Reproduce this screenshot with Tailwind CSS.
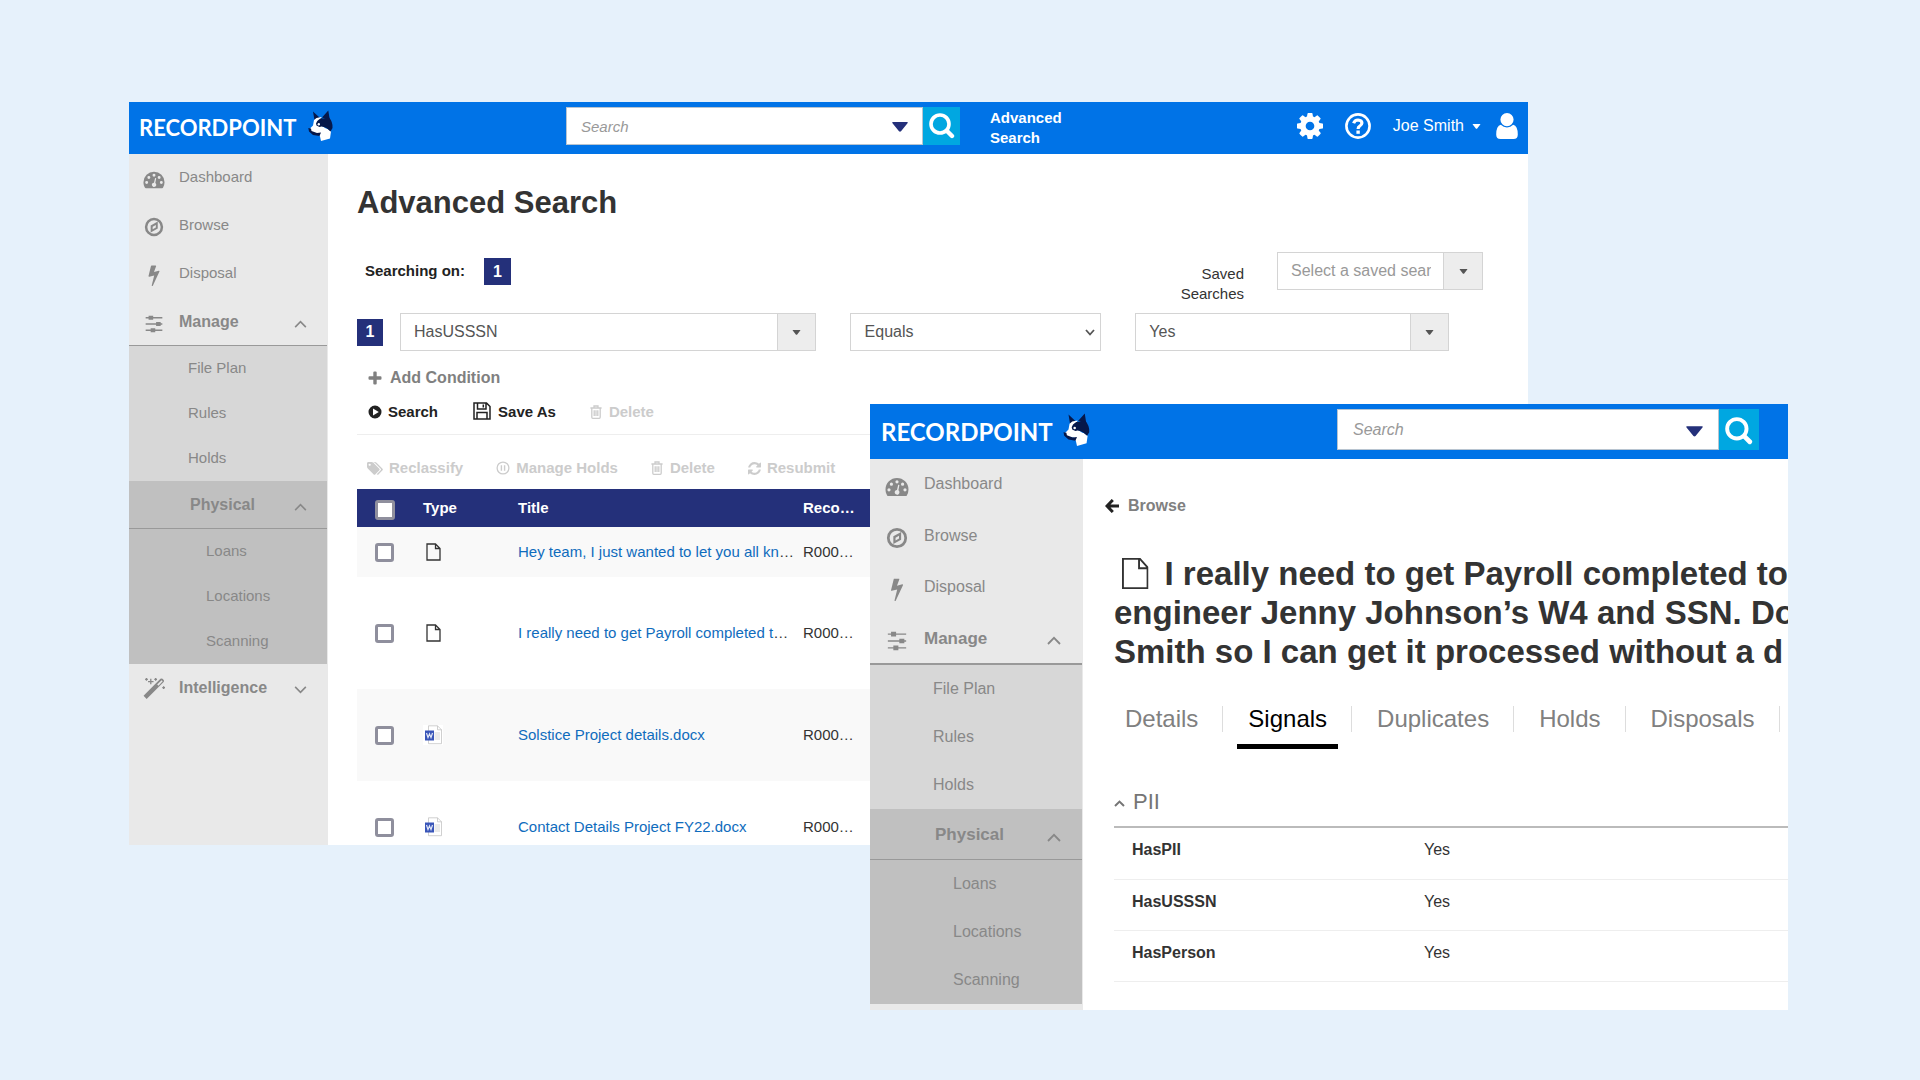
<!DOCTYPE html>
<html lang="en">
<head>
  <meta charset="UTF-8">
  <meta name="viewport" content="width=device-width, initial-scale=1.0">
  <title>RecordPoint - Advanced Search</title>
  <script src="https://cdn.jsdelivr.net/npm/@tailwindcss/browser@4"></script>
</head>
<body class="relative min-h-screen overflow-hidden bg-[#e6f1fb] font-['Liberation_Sans',Arial,sans-serif] text-[15px] text-[#333]">

  <!-- Icon sprite -->
  <svg class="hidden" xmlns="http://www.w3.org/2000/svg">
    <symbol id="dog" viewBox="0 0 26 32">
      <path fill="#06184a" d="M5 1.500L12 8L6.500 10.500Z M20.300 .5L21.800 10L14 7.500Z"/>
      <path fill="#fff" d="M6 10L8.500 8L13.500 7L12 12L14 16L18 18.500L20 19L23 21.500L22 28.500L13 31L12 26.500L10 23L4 23L1 19.500L5 15.500Z"/>
      <path fill="#06184a" d="M11 9.500Q13 7.500 15 8.500L21 7.500Q25 12 24.500 18L22.500 21.500L18.500 18Q14 15.500 11.500 17L8.500 15.500L8 13.500Q9 10.500 11 9.500Z"/>
      <path fill="#06184a" d="M.3 18L3 18.500L3.500 21L9 23L13 22.500L11.500 26L5 25L1 21.500Z"/>
      <circle cx="10.800" cy="14.200" r="1.200" fill="#fff"/>
    </symbol>
    <symbol id="gauge" viewBox="0 0 24 20">
      <path fill="currentColor" fill-rule="evenodd" d="M12 1A11.500 11.500 0 0 0 .5 12.500c0 2.200.6 4.200 1.700 6q.3.500.9.500h17.800q.6 0 .9-.5a11.500 11.500 0 0 0 1.700-6A11.500 11.500 0 0 0 12 1ZM4 11.200a1.600 1.600 0 1 1 0 3.200a1.600 1.600 0 1 1 0-3.200ZM6.400 5.600a1.600 1.600 0 1 1 0 3.200a1.600 1.600 0 1 1 0-3.200ZM12 3.200a1.600 1.600 0 1 1 0 3.200a1.600 1.600 0 1 1 0-3.200ZM17.600 5.600a1.600 1.600 0 1 1 0 3.200a1.600 1.600 0 1 1 0-3.200ZM20 11.200a1.600 1.600 0 1 1 0 3.200a1.600 1.600 0 1 1 0-3.200ZM13.200 7.800l1.200.3l-1 5.200a2.400 2.400 0 1 1-1.400-.4Z"/>
    </symbol>
    <symbol id="compass" viewBox="0 0 24 24">
      <circle cx="12" cy="12" r="9.500" fill="none" stroke="currentColor" stroke-width="3"/>
      <path fill="currentColor" fill-rule="evenodd" d="M16.500 5.500V13.800L8 18.500V10.200ZM14.200 9.600L10.400 11.800V14.800L14.200 12.600Z"/>
    </symbol>
    <symbol id="bolt" viewBox="0 0 1792 1792">
      <path fill="currentColor" d="M1333 566q18 20 7 44l-540 1157q-13 25-42 25-4 0-14-2-17-5-25.500-19t-4.500-30l197-808-406 101q-4 1-12 1-18 0-31-11-18-15-13-39l201-825q4-16 17-26t31-10h328q19 0 32 12.500t13 29.500q0 8-5 18l-171 463 396-98q8-2 12-2 19 0 34 15z"/>
    </symbol>
    <symbol id="sliders" viewBox="0 0 24 24">
      <path stroke="currentColor" stroke-width="1.600" d="M2 4.500h20M2 12h20M2 19.500h20"/>
      <path fill="currentColor" d="M5.500 2h5.500v5H5.500zM14.500 9.500H20v5h-5.500zM8 17h5.500v5H8z"/>
    </symbol>
    <symbol id="wand" viewBox="0 0 24 24">
      <path fill="currentColor" fill-rule="evenodd" d="M.6 20.500L19 2Q20.200 1 21.300 2L22.600 3.300Q23.500 4.400 22.500 5.500L4 24ZM20.300 3.500L15.500 8.200L16.800 9.500L21.500 4.700Z"/>
      <path stroke="currentColor" stroke-width="1.400" d="M8.500 2v6M5.500 5h6M3.800 1v3M2.300 2.500h3M13.800 1v3M12.300 2.500h3M22.500 10v3M21 11.500h3"/>
    </symbol>
    <symbol id="chevron-up" viewBox="0 0 14 9">
      <path fill="none" stroke="currentColor" stroke-width="1.800" d="M1 8L7 1.800L13 8"/>
    </symbol>
    <symbol id="chevron-up-bold" viewBox="0 0 11 7">
      <path fill="none" stroke="currentColor" stroke-width="2" d="M1 6L5.500 1.600L10 6"/>
    </symbol>
    <symbol id="chevron-down" viewBox="0 0 14 9">
      <path fill="none" stroke="currentColor" stroke-width="1.800" d="M1 1L7 7.200L13 1"/>
    </symbol>
    <symbol id="chevron-down-bold" viewBox="0 0 10 7">
      <path fill="none" stroke="currentColor" stroke-width="1.800" d="M1 1L5 5.500L9 1"/>
    </symbol>
    <symbol id="caret" viewBox="0 0 16 10">
      <path fill="currentColor" d="M.5 0H15.500Q16 .6 15.500 1.200L9 9.300Q8 10 7 9.300L.5 1.200Q0 .6 .5 0Z"/>
    </symbol>
    <symbol id="magnifier" viewBox="0 0 26 26">
      <circle cx="11" cy="11" r="9" fill="none" stroke="currentColor" stroke-width="3.600"/>
      <path stroke="currentColor" stroke-width="4.400" stroke-linecap="round" d="M18 18L23 23"/>
    </symbol>
    <symbol id="cog" viewBox="128 128 1536 1536">
      <path fill="currentColor" d="M1152 896q0-106-75-181t-181-75-181 75-75 181 75 181 181 75 181-75 75-181zm512-109v222q0 12-8 23t-20 13l-185 28q-19 54-39 91 35 50 107 138 10 12 10 25t-9 23q-27 37-99 108t-94 71q-12 0-26-9l-138-108q-44 23-91 38-16 136-29 186-7 28-36 28h-222q-14 0-24.500-8.500t-11.500-21.500l-28-184q-49-16-90-37l-141 107q-10 9-25 9-14 0-25-11-126-114-165-168-7-10-7-23 0-12 8-23 15-21 51-66.500t54-70.500q-27-50-41-99l-183-27q-13-2-21-12.500t-8-23.500v-222q0-12 8-23t19-13l186-28q14-46 39-92-40-57-107-138-10-12-10-24 0-10 9-23 26-36 98.500-107.500t94.500-71.500q13 0 26 10l138 107q44-23 91-38 16-136 29-186 7-28 36-28h222q14 0 24.500 8.500t11.500 21.500l28 184q49 16 90 37l142-107q9-9 24-9 13 0 25 10 129 119 165 170 7 8 7 22 0 12-8 23-15 21-51 66.500t-54 70.500q26 50 41 98l183 28q13 2 21 12.500t8 23.500z"/>
    </symbol>
    <symbol id="help" viewBox="0 0 26 26">
      <circle cx="13" cy="13" r="11.600" fill="none" stroke="currentColor" stroke-width="2.600"/>
      <path fill="none" stroke="currentColor" stroke-width="3.200" d="M8.600 10.200Q9.800 7 13 7Q16.900 7.200 16.900 10Q16.800 11.800 14.800 13Q13.100 14 13.100 16"/>
      <path fill="currentColor" d="M11.400 17.500h3.400v3.300h-3.400z"/>
    </symbol>
    <symbol id="user" viewBox="0 0 22 26">
      <path fill="currentColor" d="M11 0a6.600 6.600 0 0 1 0 13.200A6.600 6.600 0 0 1 11 0ZM4.800 11.800Q7.500 14.400 11 14.400T17.200 11.800Q21.800 13 21.800 21.500Q21.800 26 17.500 26H4.500Q.2 26 .2 21.500Q.2 13 4.800 11.800Z"/>
    </symbol>
    <symbol id="plus" viewBox="0 0 14 14">
      <path fill="currentColor" d="M5.300 1.500q0-1 1-1h1.400q1 0 1 1v3.800h3.800q1 0 1 1v1.400q0 1-1 1H8.700v3.800q0 1-1 1H6.300q-1 0-1-1V8.700H1.500q-1 0-1-1V6.300q0-1 1-1h3.800Z"/>
    </symbol>
    <symbol id="play" viewBox="0 0 14 14">
      <path fill="currentColor" fill-rule="evenodd" d="M7 .5a6.500 6.500 0 1 1 0 13a6.500 6.500 0 1 1 0-13ZM5 3.600V10.400L10.800 7Z"/>
    </symbol>
    <symbol id="floppy" viewBox="0 0 18 18">
      <path fill="none" stroke="currentColor" stroke-width="1.500" d="M1 1H13.500L17 4.500V17H1ZM4.500 1V7H13V1M4 17V10.500H14V17M10.300 2.500V5.500"/>
    </symbol>
    <symbol id="trash" viewBox="0 0 12 14">
      <path fill="none" stroke="currentColor" stroke-width="1.300" d="M.4 3H11.600M1.800 3V12.200Q1.800 13.300 2.800 13.300H9.200Q10.200 13.300 10.200 12.200V3M4 3V1H8V3M4.200 5.300V11M6 5.300V11M7.800 5.300V11"/>
    </symbol>
    <symbol id="tags" viewBox="0 128 1920 1536">
      <path fill="currentColor" d="M448 448q0-53-37.500-90.500t-90.500-37.500-90.500 37.500-37.500 90.500 37.500 90.500 90.500 37.500 90.500-37.500 37.500-90.500zm1067 576q0 53-37 90l-491 492q-39 37-91 37-53 0-90-37l-715-716q-38-37-64.500-101t-26.500-117v-416q0-52 38-90t90-38h416q53 0 117 26.500t102 64.500l715 714q37 39 37 91zm384 0q0 53-37 90l-491 492q-39 37-91 37-36 0-59-14t-53-45l470-470q37-37 37-90 0-52-37-91l-715-714q-38-38-102-64.500t-117-26.500h224q53 0 117 26.500t102 64.500l715 714q37 39 37 91z"/>
    </symbol>
    <symbol id="pause" viewBox="0 0 14 14">
      <circle cx="7" cy="7" r="5.900" fill="none" stroke="currentColor" stroke-width="1.300"/>
      <path fill="none" stroke="currentColor" stroke-width="1.400" d="M5.400 4.300v5.400M8.600 4.300v5.400"/>
    </symbol>
    <symbol id="refresh" viewBox="128 128 1536 1536">
      <path fill="currentColor" d="M1639 1056q0 5-1 7-64 268-268 434.500t-478 166.500q-146 0-282.500-55t-243.500-157l-129 129q-19 19-45 19t-45-19-19-45v-448q0-26 19-45t45-19h448q26 0 45 19t19 45-19 45l-137 137q71 66 161 102t187 36q134 0 250-65t186-179q11-17 53-117 8-23 30-23h192q13 0 22.500 9.500t9.500 22.500zm25-800v448q0 26-19 45t-45 19h-448q-26 0-45-19t-19-45 19-45l138-138q-148-137-349-137-134 0-250 65t-186 179q-11 17-53 117-8 23-30 23h-199q-13 0-22.500-9.500t-9.500-22.500v-7q65-268 270-434.500t480-166.500q146 0 284 55.500t245 156.500l130-129q19-19 45-19t45 19 19 45z"/>
    </symbol>
    <symbol id="file" viewBox="0 0 15 18">
      <path fill="none" stroke="currentColor" stroke-width="1.300" d="M1 1H9.500L14 5.500V17H1ZM9.500 1V5.500H14"/>
    </symbol>
    <symbol id="file-lg" viewBox="0 0 28 33">
      <path fill="none" stroke="currentColor" stroke-width="2" d="M1 1H19L27 10V32H1ZM18 1V11H27"/>
    </symbol>
    <symbol id="word" viewBox="0 0 20 20">
      <path fill="#fff" d="M0 0H20V20H0Z"/>
      <path fill="#fff" stroke="#c4c4c4" stroke-width=".8" d="M5.500 .8H14.500L18.500 4.800V18.700H5.500ZM14.500 .8V4.800H18.500"/>
      <path stroke="#d5d5d5" d="M11.500 8h5.500M11.500 10h5.500M11.500 12h5.500M11.500 14h5.500"/>
      <path fill="#3955b8" d="M2 5.500H11V15.500H2Z"/>
      <path fill="none" stroke="#e4e9f8" stroke-width="1.200" d="M3.500 8L5 12.600L6.500 8.800L8 12.600L9.500 8"/>
    </symbol>
    <symbol id="arrow-left" viewBox="0 0 14 14">
      <path fill="none" stroke="currentColor" stroke-width="3" d="M7.800 1L2 7L7.800 13M2.500 7H14"/>
    </symbol>
  </svg>

  <!-- Search window -->
  <section class="absolute top-[102px] right-[392px] bottom-[235px] left-[129px] flex flex-col overflow-hidden bg-white">
    <header class="flex h-[52px] shrink-0 items-center bg-[#0073e7] pr-2.5 pb-1 text-white">
      <a href="#" class="flex w-[437px] shrink-0 items-center gap-3 pl-2.5">
        <span class="pt-1 font-['Lato',sans-serif] text-[22px] leading-6 font-bold">RECORDPOINT</span>
        <svg class="h-8 w-[26px]"><use href="#dog"/></svg>
      </a>
      <form class="flex h-[38px] w-[394px]">
        <div class="flex flex-1 items-center border border-[#b8c4d0] bg-white pr-3.5">
          <input type="text" aria-label="Search" placeholder="Search" class="h-full min-w-0 flex-1 pl-3.5 text-[15px] text-[#555] placeholder:text-[#999] placeholder:italic">
          <button type="button" aria-label="Search options" class="text-[#24307a]"><svg class="mt-0.5 h-2.5 w-4"><use href="#caret"/></svg></button>
        </div>
        <button type="button" aria-label="Run search" class="flex w-[37px] items-center justify-center bg-[#00a7e1]"><svg class="size-[26px]"><use href="#magnifier"/></svg></button>
      </form>
      <a href="#" class="ml-[30px] w-20 pt-1 leading-5 font-bold">Advanced Search</a>
      <div class="ml-auto flex items-center">
        <button type="button" aria-label="Settings"><svg class="size-[26px]"><use href="#cog"/></svg></button>
        <button type="button" aria-label="Help" class="ml-[22px]"><svg class="size-[26px]"><use href="#help"/></svg></button>
        <button type="button" class="ml-[22px] flex items-center gap-2 text-base leading-5">Joe Smith <svg class="h-[5px] w-[9px]"><use href="#caret"/></svg></button>
        <a href="#" aria-label="Account" class="ml-[15px]"><svg class="h-[26px] w-[22px]"><use href="#user"/></svg></a>
      </div>
    </header>

    <div class="flex min-h-0 flex-1">
      <nav class="w-[199px] shrink-0 bg-[#e9e9e9] pr-px text-[#888]">
        <a href="#" class="flex h-12 items-center gap-3.5 pb-0.5 pl-3.5"><svg class="mt-1.5 h-5 w-[22px]"><use href="#gauge"/></svg>Dashboard</a>
        <a href="#" class="flex h-12 items-center gap-3.5 pb-0.5 pl-3.5"><svg class="mt-1 h-5 w-[22px]"><use href="#compass"/></svg>Browse</a>
        <a href="#" class="flex h-12 items-center gap-3.5 pb-0.5 pl-3.5"><svg class="mt-1 h-[22px] w-[22px]"><use href="#bolt"/></svg>Disposal</a>
        <button type="button" class="flex h-12 w-full items-center gap-3.5 border-b border-[#999] pr-5 pl-3.5 text-base font-bold"><svg class="mt-1 h-5 w-[22px]"><use href="#sliders"/></svg>Manage<svg class="mt-1 ml-auto h-2 w-[13px]"><use href="#chevron-up"/></svg></button>
        <div class="bg-[#d7d7d7]">
          <a href="#" class="flex h-[45px] items-center pl-[59px]">File Plan</a>
          <a href="#" class="flex h-[45px] items-center pl-[59px]">Rules</a>
          <a href="#" class="flex h-[45px] items-center pl-[59px]">Holds</a>
        </div>
        <div class="bg-[#c0c0c0]">
          <button type="button" class="flex h-12 w-full items-center border-b border-[#999] pr-5 pl-[61px] text-base font-bold">Physical<svg class="mt-1 ml-auto h-2 w-[13px]"><use href="#chevron-up"/></svg></button>
          <a href="#" class="flex h-[45px] items-center pl-[77px]">Loans</a>
          <a href="#" class="flex h-[45px] items-center pl-[77px]">Locations</a>
          <a href="#" class="flex h-[45px] items-center pl-[77px]">Scanning</a>
        </div>
        <button type="button" class="flex h-12 w-full items-center gap-3.5 pr-5 pl-3.5 text-base font-bold"><svg class="size-[22px]"><use href="#wand"/></svg>Intelligence<svg class="mt-1 ml-auto h-2 w-[13px]"><use href="#chevron-down"/></svg></button>
      </nav>

      <main class="min-w-0 flex-1 pt-[29px] pr-[45px] pl-[29px]">
        <h1 class="text-[31px] leading-10 font-bold">Advanced Search</h1>

        <div class="mt-[29px] flex items-start">
          <span class="ml-2 pt-2 leading-[22px] font-bold text-[#222]">Searching on:</span>
          <span class="mt-1.5 ml-[19px] flex h-[27px] w-[27px] items-center justify-center bg-[#24307a] text-base font-bold text-white">1</span>
          <label for="saved" class="mt-3 ml-auto w-20 text-right leading-5">Saved Searches</label>
          <div class="ml-[33px] flex h-[38px] w-[206px] border border-[#d4d4d4]">
            <input id="saved" type="text" placeholder="Select a saved search" class="mr-3 ml-[13px] min-w-0 flex-1 text-base placeholder:text-[#999]">
            <button type="button" aria-label="Show saved searches" class="flex w-[39px] items-center justify-center border-l border-[#d4d4d4] bg-[#ededed] text-[#555]"><svg class="h-[5px] w-[9px]"><use href="#caret"/></svg></button>
          </div>
        </div>

        <div class="mt-[9px] flex items-center gap-[17px] pr-[34px]">
          <span class="flex h-[27px] w-[26px] shrink-0 items-center justify-center bg-[#24307a] text-base font-bold text-white">1</span>
          <div class="grid flex-1 grid-cols-[416fr_252fr_314fr] gap-[34px] text-base text-[#555]">
            <div class="flex h-[38px] border border-[#d4d4d4]">
              <input type="text" aria-label="Field" value="HasUSSSN" class="min-w-0 flex-1 pl-[13px]">
              <button type="button" aria-label="Show fields" class="flex w-[38px] items-center justify-center border-l border-[#d4d4d4] bg-[#ededed]"><svg class="h-[5px] w-[9px]"><use href="#caret"/></svg></button>
            </div>
            <div class="relative h-[38px]">
              <select aria-label="Operator" class="h-full w-full appearance-none border border-[#d4d4d4] bg-white pl-3.5">
                <option>Equals</option>
              </select>
              <svg class="pointer-events-none absolute top-4 right-1.5 h-[7px] w-[10px]"><use href="#chevron-down-bold"/></svg>
            </div>
            <div class="flex h-[38px] border border-[#d4d4d4]">
              <input type="text" aria-label="Value" value="Yes" class="min-w-0 flex-1 pl-[13px]">
              <button type="button" aria-label="Show values" class="flex w-[38px] items-center justify-center border-l border-[#d4d4d4] bg-[#ededed]"><svg class="h-[5px] w-[9px]"><use href="#caret"/></svg></button>
            </div>
          </div>
        </div>

        <button type="button" class="mt-[17px] ml-[11px] flex items-center gap-2 text-base leading-5 font-bold text-[#808080]"><svg class="size-3.5"><use href="#plus"/></svg>Add Condition</button>

        <div class="mt-3.5 flex items-center pl-[11px] leading-5 font-bold text-[#222]">
          <button type="button" class="flex items-center gap-1.5"><svg class="size-3.5"><use href="#play"/></svg>Search</button>
          <button type="button" class="ml-[35px] flex items-center gap-[7px]"><svg class="mb-0.5 size-[18px]"><use href="#floppy"/></svg>Save As</button>
          <button type="button" class="ml-[34px] flex items-center gap-[7px] text-[#ccc]"><svg class="h-3.5 w-3"><use href="#trash"/></svg>Delete</button>
        </div>

        <div class="mt-3 flex items-center gap-[33px] border-t border-[#eee] pt-[23px] pl-2.5 leading-5 font-bold text-[#ccc]">
          <button type="button" class="flex items-center gap-1.5"><svg class="h-[13px] w-4"><use href="#tags"/></svg>Reclassify</button>
          <button type="button" class="flex items-center gap-1.5"><svg class="size-3.5"><use href="#pause"/></svg>Manage Holds</button>
          <button type="button" class="flex items-center gap-[7px]"><svg class="h-3.5 w-3"><use href="#trash"/></svg>Delete</button>
          <button type="button" class="flex items-center gap-1.5"><svg class="size-[13px]"><use href="#refresh"/></svg>Resubmit</button>
        </div>

        <table class="mt-[11px] w-full table-fixed text-left">
          <colgroup>
            <col class="w-[66px]">
            <col class="w-[95px]">
            <col class="w-[285px]">
            <col>
          </colgroup>
          <thead>
            <tr class="h-[38px] bg-[#24307a] text-white">
              <th class="pt-1 pl-[18px] align-middle"><input type="checkbox" aria-label="Select all" class="block size-5 appearance-none rounded-[3px] border-[3px] border-[#8f8f9d] bg-white"></th>
              <th>Type</th>
              <th>Title</th>
              <th>Reco…</th>
            </tr>
          </thead>
          <tbody>
            <tr class="h-[50px] bg-[#f9f9f9]">
              <td class="pl-[18px]"><input type="checkbox" aria-label="Select row" class="block size-[19px] appearance-none rounded-[3px] border-[3px] border-[#8f8f9d] bg-white"></td>
              <td class="pl-[3px]"><svg class="h-[18px] w-[15px]"><use href="#file"/></svg></td>
              <td class="whitespace-nowrap"><a href="#" class="text-[#0f6cbd]">Hey team, I just wanted to let you all kn</a>…</td>
              <td>R000…</td>
            </tr>
            <tr class="h-28">
              <td class="pl-[18px]"><input type="checkbox" aria-label="Select row" class="block size-[19px] appearance-none rounded-[3px] border-[3px] border-[#8f8f9d] bg-white"></td>
              <td class="pl-[3px]"><svg class="h-[18px] w-[15px]"><use href="#file"/></svg></td>
              <td class="whitespace-nowrap"><a href="#" class="text-[#0f6cbd]">I really need to get Payroll completed t</a>…</td>
              <td>R000…</td>
            </tr>
            <tr class="h-[92px] bg-[#f9f9f9]">
              <td class="pl-[18px]"><input type="checkbox" aria-label="Select row" class="block size-[19px] appearance-none rounded-[3px] border-[3px] border-[#8f8f9d] bg-white"></td>
              <td><svg class="size-5"><use href="#word"/></svg></td>
              <td class="whitespace-nowrap"><a href="#" class="text-[#0f6cbd]">Solstice Project details.docx</a></td>
              <td>R000…</td>
            </tr>
            <tr class="h-[92px]">
              <td class="pl-[18px]"><input type="checkbox" aria-label="Select row" class="block size-[19px] appearance-none rounded-[3px] border-[3px] border-[#8f8f9d] bg-white"></td>
              <td><svg class="size-5"><use href="#word"/></svg></td>
              <td class="whitespace-nowrap"><a href="#" class="text-[#0f6cbd]">Contact Details Project FY22.docx</a></td>
              <td>R000…</td>
            </tr>
          </tbody>
        </table>
      </main>
    </div>
  </section>

  <!-- Record window -->
  <section class="absolute top-[404px] right-[132px] bottom-[70px] left-[870px] flex flex-col overflow-hidden bg-white text-base">
    <header class="flex h-[55px] shrink-0 items-center bg-[#0073e7] pr-[29px] pb-1 text-white">
      <a href="#" class="flex shrink-0 items-center gap-2.5 pl-[11px]">
        <span class="pt-1 font-['Lato',sans-serif] text-2xl leading-6 font-bold">RECORDPOINT</span>
        <svg class="h-[34px] w-7"><use href="#dog"/></svg>
      </a>
      <form class="ml-auto flex h-[41px] w-[422px]">
        <div class="flex flex-1 items-center border border-[#b8c4d0] bg-white pr-[15px]">
          <input type="text" aria-label="Search" placeholder="Search" class="h-full min-w-0 flex-1 pl-[15px] text-[#555] placeholder:text-[#999] placeholder:italic">
          <button type="button" aria-label="Search options" class="text-[#24307a]"><svg class="mt-1 h-[11px] w-[17px]"><use href="#caret"/></svg></button>
        </div>
        <button type="button" aria-label="Run search" class="flex w-10 items-center justify-center bg-[#00a7e1]"><svg class="mt-0.5 size-7"><use href="#magnifier"/></svg></button>
      </form>
    </header>

    <div class="flex min-h-0 flex-1">
      <nav class="w-[213px] shrink-0 bg-[#e9e9e9] pr-px text-[#888]">
        <a href="#" class="flex h-[51px] items-center gap-[15px] pb-0.5 pl-[15px]"><svg class="mt-1.5 h-[22px] w-6"><use href="#gauge"/></svg>Dashboard</a>
        <a href="#" class="flex h-[51px] items-center gap-[15px] pl-[15px]"><svg class="mt-1 h-[22px] w-6"><use href="#compass"/></svg>Browse</a>
        <a href="#" class="flex h-[51px] items-center gap-[15px] pl-[15px]"><svg class="mt-1 h-6 w-6"><use href="#bolt"/></svg>Disposal</a>
        <button type="button" class="flex h-[53px] w-full items-center gap-[15px] border-b-2 border-[#999] pt-0.5 pr-[21px] pl-[15px] text-[17px] font-bold"><svg class="mt-1 h-[22px] w-6"><use href="#sliders"/></svg>Manage<svg class="mt-1 ml-auto h-[9px] w-3.5"><use href="#chevron-up"/></svg></button>
        <div class="bg-[#d7d7d7]">
          <a href="#" class="flex h-12 items-center pl-[63px]">File Plan</a>
          <a href="#" class="flex h-12 items-center pl-[63px]">Rules</a>
          <a href="#" class="flex h-12 items-center pl-[63px]">Holds</a>
        </div>
        <div class="bg-[#c0c0c0]">
          <button type="button" class="flex h-[51px] w-full items-center border-b border-[#999] pt-0.5 pr-[21px] pl-[65px] text-[17px] font-bold">Physical<svg class="mt-1 ml-auto h-[9px] w-3.5"><use href="#chevron-up"/></svg></button>
          <a href="#" class="flex h-12 items-center pl-[83px]">Loans</a>
          <a href="#" class="flex h-12 items-center pl-[83px]">Locations</a>
          <a href="#" class="flex h-12 items-center pl-[83px]">Scanning</a>
        </div>
      </nav>

      <main class="min-w-0 flex-1 overflow-hidden pt-[37px] pl-[22px]">
        <a href="#" class="flex items-center gap-[9px] leading-5 font-bold text-[#808080]"><svg class="size-3.5 text-[#222]"><use href="#arrow-left"/></svg>Browse</a>

        <div class="pl-[9px]">
          <h1 class="mt-[38px] text-[33px] leading-[39px] font-bold whitespace-nowrap">
            <span class="flex items-center gap-4 pl-2"><svg class="h-[33px] w-7"><use href="#file-lg"/></svg>I really need to get Payroll completed to</span>
            <span class="block">engineer Jenny Johnson’s W4 and SSN. Do</span>
            <span class="block">Smith so I can get it processed without a d</span>
          </h1>

          <ul class="mt-[35px] flex text-2xl leading-[26px] text-[#808080]">
            <li class="flex"><a href="#" class="mr-[13px] px-[11px]">Details</a><span class="h-[26px] w-px bg-[#ddd]"></span></li>
            <li class="flex"><a href="#" class="mr-[13px] ml-3.5 border-b-[5px] border-black px-[11px] pb-3 text-black">Signals</a><span class="h-[26px] w-px bg-[#ddd]"></span></li>
            <li class="flex"><a href="#" class="mr-[13px] ml-3.5 px-[11px]">Duplicates</a><span class="h-[26px] w-px bg-[#ddd]"></span></li>
            <li class="flex"><a href="#" class="mr-[13px] ml-3.5 px-[11px]">Holds</a><span class="h-[26px] w-px bg-[#ddd]"></span></li>
            <li class="flex"><a href="#" class="mr-[13px] ml-3.5 px-[11px]">Disposals</a><span class="h-[26px] w-px bg-[#ddd]"></span></li>
          </ul>

          <h2 class="mt-[39px] flex items-center gap-2 border-b-2 border-[#bbb] pb-2.5 text-[22px] leading-7 text-[#757575]"><svg class="mt-0.5 h-[7px] w-[11px]"><use href="#chevron-up-bold"/></svg>PII</h2>

          <table class="w-full table-fixed text-left">
            <colgroup>
              <col class="w-[310px]">
              <col>
            </colgroup>
            <tbody>
              <tr class="h-[51px] border-b border-[#eee]"><th class="pb-1.5 pl-[18px]">HasPII</th><td class="pb-1.5">Yes</td></tr>
              <tr class="h-[51px] border-b border-[#eee]"><th class="pb-1.5 pl-[18px]">HasUSSSN</th><td class="pb-1.5">Yes</td></tr>
              <tr class="h-[51px] border-b border-[#eee]"><th class="pb-1.5 pl-[18px]">HasPerson</th><td class="pb-1.5">Yes</td></tr>
            </tbody>
          </table>
        </div>
      </main>
    </div>
  </section>
</body>
</html>
